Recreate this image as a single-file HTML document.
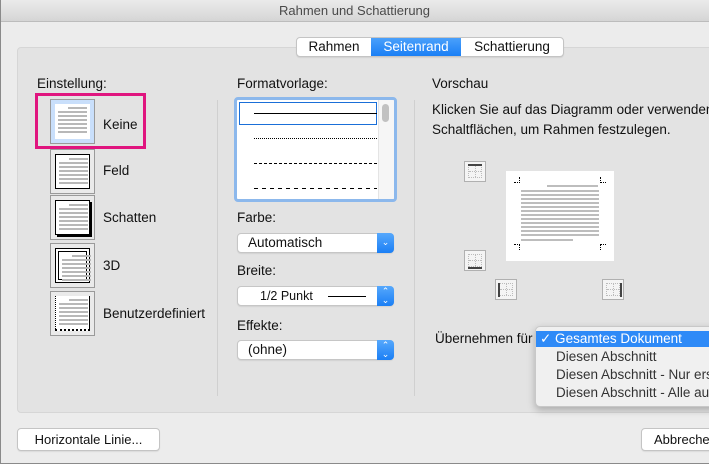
<!DOCTYPE html>
<html><head><meta charset="utf-8"><style>
*{margin:0;padding:0;box-sizing:border-box}
html,body{width:709px;height:464px;overflow:hidden}
body{background:#ececec;font-family:"Liberation Sans",Arial,sans-serif;font-size:13px;color:#111;position:relative}
#clip{position:absolute;left:0;top:0;width:709px;height:464px;overflow:hidden}
.abs{position:absolute}
#title{left:0;top:0;width:709px;height:22px;background:linear-gradient(#ebebeb,#d5d5d5);border-bottom:1px solid #bcbcbc;text-align:center;line-height:22px;color:#4a4a4a;font-size:13px}
#win{left:0;top:0;width:709px;height:464px;border-left:1px solid #8a8a8a;border-bottom:1px solid #8a8a8a}
#group{left:17px;top:47px;width:700px;height:366px;background:#e3e3e3;border:1px solid #d6d6d6;border-radius:4px}
#tabs{left:296px;top:37px;height:20px;display:flex;border:1px solid #c4c4c4;border-radius:4px;background:#fff;overflow:hidden;box-shadow:0 1px 1px rgba(0,0,0,.08)}
#tabs div{line-height:18px;font-size:13.5px;text-align:center}
#tabs .sel{background:linear-gradient(#4aa0fb,#1a7ff5);color:#fff}
.thumb{position:absolute;left:50px;width:45px;height:45px;border:1px solid #9a9a9a;background:#eaeaea}
.pg{position:absolute;left:4px;top:4px;width:35px;height:35px;background:#fff}
.pg::before{content:"";position:absolute;left:13px;top:3px;width:19px;height:2px;background:#b8b8b8}
.pg::after{content:"";position:absolute;left:3px;top:7px;width:29px;height:24px;background:repeating-linear-gradient(#b8b8b8 0 2px,transparent 2px 4px)}
.lbl{position:absolute;left:103px;font-size:13.5px}
.vline{position:absolute;width:1px;top:100px;height:296px;background:#d0d0d0}
.pop{position:absolute;left:237px;width:157px;height:20px;background:#fff;border:1px solid #c6c6c6;border-radius:4px;line-height:18px;font-size:13.5px;padding-left:10px;box-shadow:0 1px 1px rgba(0,0,0,.08)}
.pop .ar{position:absolute;right:-1px;top:-1px;width:17px;height:20px;background:linear-gradient(#56a8fc,#1a7ff5);border-radius:0 4px 4px 0;color:#fff;font-size:9px;text-align:center;line-height:9px;padding-top:1px}
.btn{position:absolute;height:23px;background:#fff;border:1px solid #c4c4c4;border-radius:4px;line-height:21px;font-size:13px;text-align:center;box-shadow:0 1px 1px rgba(0,0,0,.08)}
.sb{position:absolute;width:22px;height:21px;border:1px solid #b0b0b0;background:#f4f4f4}
.sb i{position:absolute;left:3px;top:3px;width:14px;height:13px;border:1px dotted #bbb}
.sb i::after{content:"";position:absolute;left:6px;top:0;width:0;height:11px;border-left:1px dotted #bbb}
.sb i::before{content:"";position:absolute;left:0;top:5px;width:12px;height:0;border-top:1px dotted #bbb}
</style></head><body><div id="clip">
<div id="title" class="abs">Rahmen und Schattierung</div>
<div id="group" class="abs"></div>
<div id="tabs" class="abs"><div style="width:74px">Rahmen</div><div class="sel" style="width:90px">Seitenrand</div><div style="width:102px">Schattierung</div></div>

<div class="abs" style="left:37px;top:76px;font-size:13.5px">Einstellung:</div>
<div class="abs" style="left:35px;top:93px;width:111px;height:56px;border:3px solid #e0157f"></div>
<div class="thumb" style="top:99px;background:#c9dffb"><div class="pg" style="background:#fff"></div></div>
<div class="thumb" style="top:149px"><div class="pg" style="border:1px solid #000"></div></div>
<div class="thumb" style="top:195px"><div class="pg" style="border:1px solid #000;box-shadow:2px 2px 0 #000"></div></div>
<div class="thumb" style="top:243px"><div class="pg" style="border:3px double #000;border-width:4px"></div></div>
<div class="thumb" style="top:291px"><div class="pg" style="border-right:1px solid #000;border-left:1px dotted #000;border-bottom:2px dotted #000"></div></div>
<div class="lbl" style="top:117px">Keine</div>
<div class="lbl" style="top:163px">Feld</div>
<div class="lbl" style="top:210px">Schatten</div>
<div class="lbl" style="top:258px">3D</div>
<div class="lbl" style="top:306px">Benutzerdefiniert</div>

<div class="vline" style="left:217px"></div>
<div class="vline" style="left:414px"></div>

<div class="abs" style="left:237px;top:76px;font-size:13.5px">Formatvorlage:</div>
<div class="abs" style="left:234px;top:97px;width:163px;height:105px;border:3px solid #8cb8ec;border-radius:4px;background:#fff;overflow:hidden">
 <div class="abs" style="left:2px;top:2px;width:138px;height:23px;border:1px solid #1a6fd8"></div>
 <div class="abs" style="left:17px;top:13px;width:123px;border-top:1px solid #000"></div>
 <div class="abs" style="left:17px;top:38px;width:123px;border-top:1px dotted #000"></div>
 <div class="abs" style="left:17px;top:63px;width:123px;border-top:1px dashed #000"></div>
 <div class="abs" style="left:17px;top:88px;width:123px;height:1px;background:repeating-linear-gradient(90deg,#000 0 4px,transparent 4px 8px)"></div>
 <div class="abs" style="left:141px;top:0;width:16px;height:100px;background:#f6f6f6;border-left:1px solid #e4e4e4"></div>
 <div class="abs" style="left:145px;top:4px;width:7px;height:18px;background:#c1c1c1;border-radius:4px"></div>
</div>
<div class="abs" style="left:237px;top:210px;font-size:13.5px">Farbe:</div>
<div class="pop" style="top:233px">Automatisch<div class="ar" style="line-height:18px;padding:0">&#8964;</div></div>
<div class="abs" style="left:237px;top:263px;font-size:13.5px">Breite:</div>
<div class="pop" style="top:286px;padding-left:22px;font-size:12.5px">1/2 Punkt<div class="abs" style="left:90px;top:9px;width:38px;border-top:1px solid #000"></div><div class="ar">&#8963;<br>&#8964;</div></div>
<div class="abs" style="left:237px;top:318px;font-size:13.5px">Effekte:</div>
<div class="pop" style="top:340px">(ohne)<div class="ar">&#8963;<br>&#8964;</div></div>

<div class="abs" style="left:432px;top:76px;font-size:13.5px">Vorschau</div>
<div class="abs" style="left:432px;top:100px;white-space:nowrap;line-height:20px;font-size:13.5px">Klicken Sie auf das Diagramm oder verwenden Sie die<br>Schaltflächen, um Rahmen festzulegen.</div>
<div class="sb" style="left:464px;top:161px"><i></i><div class="abs" style="left:3px;top:2px;width:14px;border-top:2px solid #444"></div></div>
<div class="sb" style="left:464px;top:250px"><i></i><div class="abs" style="left:3px;top:16px;width:14px;border-top:2px solid #444"></div></div>
<div class="sb" style="left:495px;top:279px"><i></i><div class="abs" style="left:2px;top:3px;height:14px;border-left:2px solid #444"></div></div>
<div class="sb" style="left:602px;top:279px"><i></i><div class="abs" style="left:17px;top:3px;height:14px;border-left:2px solid #444"></div></div>
<div class="abs" style="left:506px;top:171px;width:108px;height:90px;background:#fff">
 <div class="abs" style="left:41px;top:14px;width:51px;height:2px;background:#bdbdbd"></div>
 <div class="abs" style="left:15px;top:19px;width:78px;height:48px;background:repeating-linear-gradient(#bdbdbd 0 2px,transparent 2px 4px)"></div>
 <div class="abs" style="left:15px;top:68px;width:52px;height:2px;background:#bdbdbd"></div>
 <div class="abs" style="left:8px;top:6px;width:6px;height:6px;border-right:1px dotted #000;border-bottom:1px dotted #000"></div>
 <div class="abs" style="left:94px;top:6px;width:6px;height:6px;border-left:1px dotted #000;border-bottom:1px dotted #000"></div>
 <div class="abs" style="left:8px;top:73px;width:6px;height:6px;border-right:1px dotted #000;border-top:1px dotted #000"></div>
 <div class="abs" style="left:94px;top:73px;width:6px;height:6px;border-left:1px dotted #000;border-top:1px dotted #000"></div>
</div>
<div class="abs" style="left:435px;top:331px;font-size:13.5px">Übernehmen für</div>
<div class="abs" style="left:535px;top:326px;width:190px;height:81px;background:#f0f0f0;border:1px solid #c8c8c8;border-radius:5px;box-shadow:0 3px 8px rgba(0,0,0,.25);color:#333;overflow:hidden;font-size:13.5px">
 <div class="abs" style="left:0;top:4px;width:190px;height:16px;background:#2e8af7;color:#fff;line-height:16px;padding-left:4px">&#10003; Gesamtes Dokument</div>
 <div class="abs" style="left:20px;top:22px;white-space:nowrap">Diesen Abschnitt</div>
 <div class="abs" style="left:20px;top:40px;white-space:nowrap">Diesen Abschnitt - Nur erste Seite</div>
 <div class="abs" style="left:20px;top:58px;white-space:nowrap">Diesen Abschnitt - Alle außer erster</div>
</div>

<div class="btn" style="left:17px;top:428px;width:143px">Horizontale Linie...</div>
<div class="btn" style="left:641px;top:428px;width:90px;text-align:left;padding-left:12px">Abbrechen</div>
<div id="win" class="abs"></div>
</div></body></html>
